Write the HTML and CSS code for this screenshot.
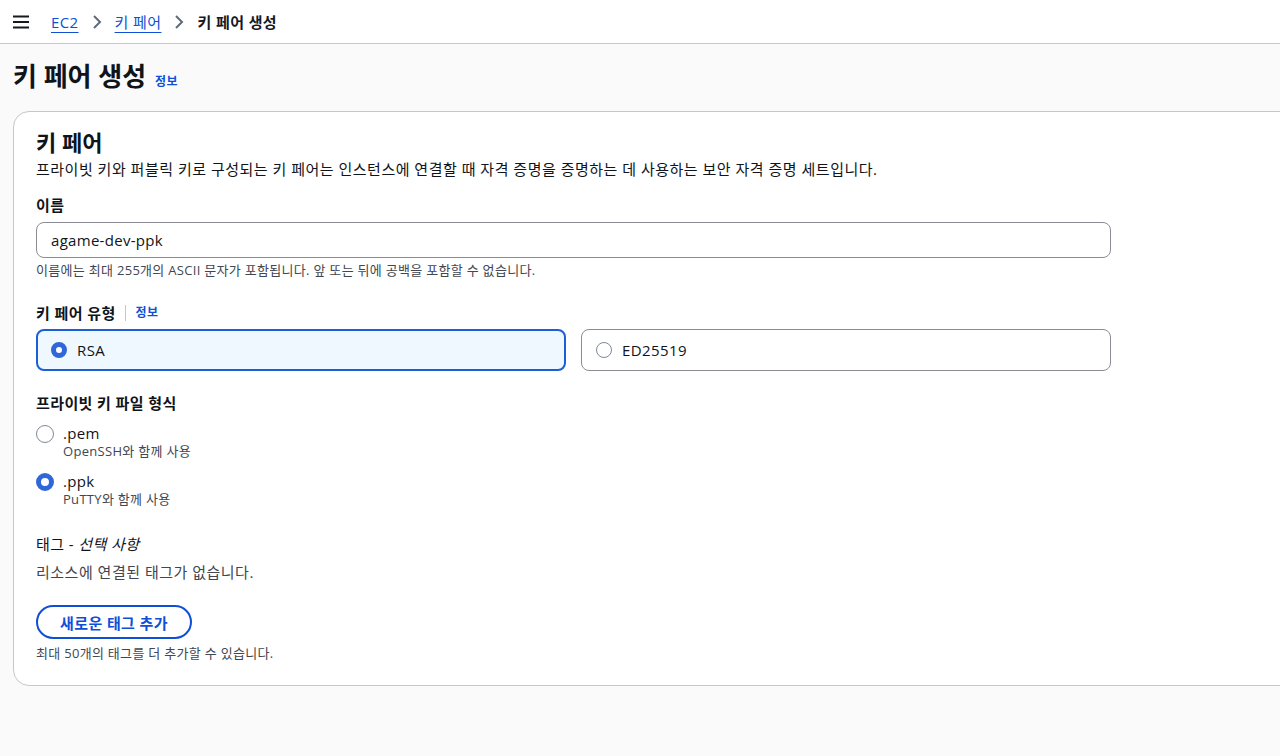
FILE: index.html
```html
<!DOCTYPE html>
<html lang="ko">
<head>
    <meta charset="UTF-8">
    <title>키 페어 생성</title>
    <link rel="stylesheet" href="styles.css">
</head>
<body>
    <div class="topbar">
        <svg class="menu-icon" width="16" height="14" viewBox="0 0 16 14">
            <path d="M0 1.5h16M0 7h16M0 12.5h16" stroke="#16191f" stroke-width="2"/>
        </svg>
        <nav class="crumbs">
            <a href="#">EC2</a>
            <svg class="chev" width="10" height="14" viewBox="0 0 10 14"><path d="M2 1l6 6-6 6" fill="none" stroke="#5f6b7a" stroke-width="2"/></svg>
            <a href="#">키 페어</a>
            <svg class="chev" width="10" height="14" viewBox="0 0 10 14"><path d="M2 1l6 6-6 6" fill="none" stroke="#5f6b7a" stroke-width="2"/></svg>
            <span class="current">키 페어 생성</span>
        </nav>
    </div>

    <div class="page">
        <div class="page-head">
            <h1>키 페어 생성</h1>
            <a class="info" href="#">정보</a>
        </div>

        <div class="card">
            <h2>키 페어</h2>
            <p class="desc">프라이빗 키와 퍼블릭 키로 구성되는 키 페어는 인스턴스에 연결할 때 자격 증명을 증명하는 데 사용하는 보안 자격 증명 세트입니다.</p>

            <div class="label first">이름</div>
            <div class="input">agame-dev-ppk</div>
            <div class="hint">이름에는 최대 255개의 ASCII 문자가 포함됩니다. 앞 또는 뒤에 공백을 포함할 수 없습니다.</div>

            <div class="label gap-lg">키 페어 유형 <span class="sep"></span><a class="info" href="#">정보</a></div>
            <div class="tiles">
                <div class="tile selected"><span class="radio on"></span>RSA</div>
                <div class="tile"><span class="radio"></span>ED25519</div>
            </div>

            <div class="label gap-md">프라이빗 키 파일 형식</div>
            <div class="option first-opt">
                <span class="radio"></span>
                <div>
                    <div class="opt-title">.pem</div>
                    <div class="opt-sub">OpenSSH와 함께 사용</div>
                </div>
            </div>
            <div class="option">
                <span class="radio on"></span>
                <div>
                    <div class="opt-title">.ppk</div>
                    <div class="opt-sub">PuTTY와 함께 사용</div>
                </div>
            </div>

            <div class="tags-title">태그 - <i>선택 사항</i></div>
            <div class="tags-empty">리소스에 연결된 태그가 없습니다.</div>
            <button class="btn">새로운 태그 추가</button>
            <div class="hint small-gap">최대 50개의 태그를 더 추가할 수 있습니다.</div>
        </div>
    </div>
</body>
</html>
```

FILE: styles.css
```css
body {
    margin: 0;
    background: #fafafa;
    color: #0f141a;
    font-family: "Open Sans", "Noto Sans CJK KR", sans-serif;
    overflow: hidden;
}
a {
    color: #0f4fd6;
}

.topbar {
    height: 44px;
    background: #fff;
    border-bottom: 1px solid #c6c6cd;
    display: flex;
    align-items: center;
    padding-left: 13px;
    box-sizing: border-box;
}
.menu-icon {
    margin-right: 22px;
}
.crumbs {
    display: flex;
    align-items: center;
    gap: 13px;
    font-size: 15px;
    line-height: 20px;
    letter-spacing: 0.4px;
}
.crumbs a {
    text-underline-offset: 4px;
}
.crumbs .current {
    color: #16191f;
    font-weight: 600;
}

.page {
    padding: 14px 0 0 13px;
}
.page-head {
    display: flex;
    align-items: baseline;
    gap: 9px;
}
h1 {
    margin: 0;
    font-size: 26px;
    line-height: 36px;
    font-weight: 700;
}
.info {
    font-size: 12px;
    font-weight: 700;
    text-decoration: none;
    letter-spacing: 0.3px;
}

.card {
    margin-top: 17px;
    margin-right: -30px;
    background: #fff;
    border: 1px solid #c6c6cd;
    border-radius: 16px;
    padding: 16px 22px 24px;
}
.card > * {
    max-width: 1075px;
}
h2 {
    margin: 0;
    font-size: 22px;
    line-height: 28px;
    font-weight: 700;
}
.desc {
    margin: 3px 0 0;
    font-size: 15px;
    line-height: 20px;
    letter-spacing: 0.5px;
}
.label {
    font-size: 15px;
    line-height: 20px;
    font-weight: 700;
    letter-spacing: 0.4px;
    display: flex;
    align-items: center;
}
.label.first {
    margin-top: 16px;
}
.label.gap-lg {
    margin-top: 25px;
}
.label.gap-md {
    margin-top: 22px;
}
.sep {
    display: inline-block;
    width: 1px;
    height: 16px;
    background: #c6c6cd;
    margin: 0 10px 0 9px;
}
.input {
    margin-top: 7px;
    height: 36px;
    box-sizing: border-box;
    border: 1px solid #8c8c94;
    border-radius: 8px;
    padding: 0 14px;
    display: flex;
    align-items: center;
    font-size: 15px;
    letter-spacing: 0.3px;
}
.hint {
    margin-top: 4px;
    font-size: 13px;
    line-height: 16px;
    letter-spacing: 0.3px;
    color: #424650;
}
.hint.small-gap {
    margin-top: 6px;
}

.tiles {
    margin-top: 6px;
    display: grid;
    grid-template-columns: 1fr 1fr;
    gap: 15px;
}
.tile {
    height: 42px;
    box-sizing: border-box;
    border: 1px solid #8c8c94;
    border-radius: 8px;
    display: flex;
    align-items: center;
    padding-left: 14px;
    font-size: 15px;
    letter-spacing: 0.4px;
    gap: 10px;
}
.tile.selected {
    border: 2px solid #1a5fd6;
    background: #f0f8ff;
    padding-left: 13px;
}

.radio {
    width: 16px;
    height: 16px;
    box-sizing: border-box;
    border: 1px solid #7d8998;
    border-radius: 50%;
    flex-shrink: 0;
    background: #fff;
}
.radio.on {
    border: 5px solid #2f67d8;
}

.option {
    display: flex;
    gap: 9px;
    margin-top: 11px;
}
.option.first-opt {
    margin-top: 10px;
}
.option .radio {
    margin-top: 2px;
    width: 18px;
    height: 18px;
}
.opt-title {
    font-size: 15px;
    line-height: 20px;
    letter-spacing: 0.3px;
}
.opt-sub {
    font-size: 13px;
    line-height: 17px;
    letter-spacing: 0.3px;
    color: #424650;
}

.tags-title {
    margin-top: 26px;
    font-size: 15px;
    line-height: 20px;
    letter-spacing: 0.4px;
}
.tags-empty {
    margin-top: 8px;
    font-size: 15px;
    line-height: 20px;
    letter-spacing: 0.5px;
    color: #424650;
}
.btn {
    margin-top: 23px;
    height: 34px;
    padding: 0 22px;
    border: 2px solid #0f4fd6;
    border-radius: 20px;
    background: #fff;
    color: #0f4fd6;
    font-family: inherit;
    font-size: 15px;
    font-weight: 700;
    letter-spacing: 0.4px;
    display: block;
}
```
